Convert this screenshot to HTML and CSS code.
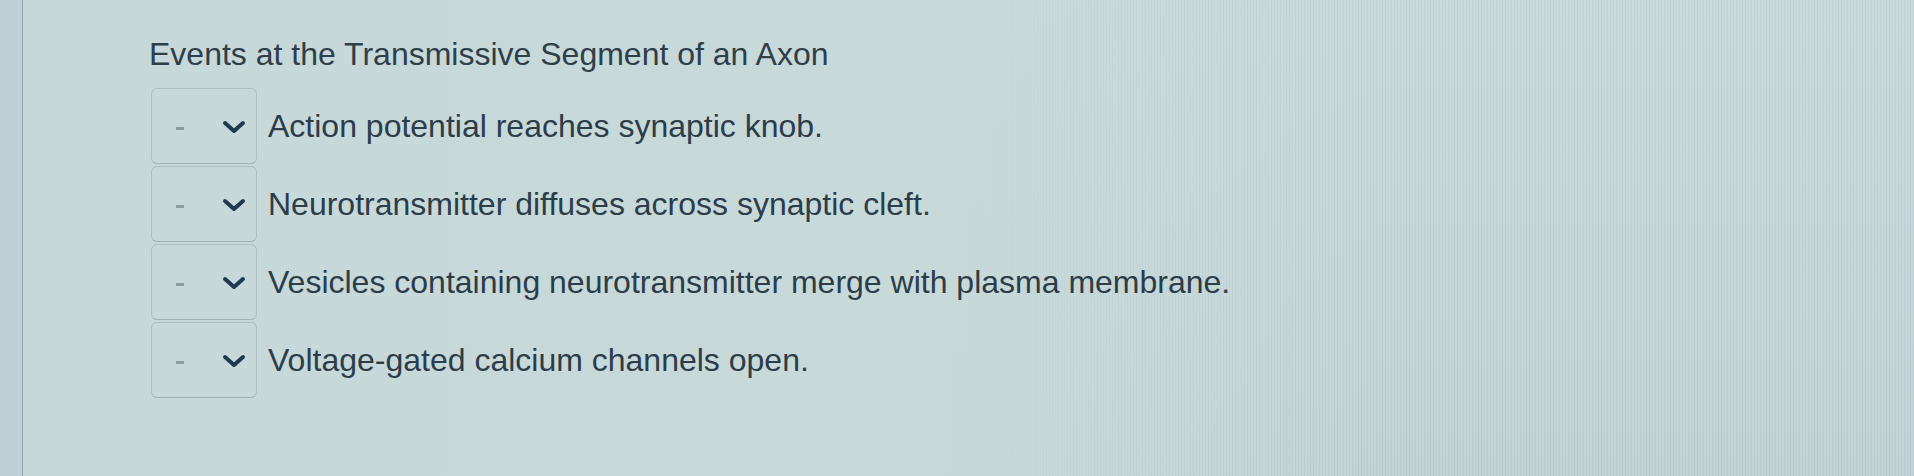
FILE: index.html
```html
<!DOCTYPE html>
<html lang="en">
<head>
  <meta charset="UTF-8">
  <title>Events at the Transmissive Segment of an Axon</title>
  <link rel="stylesheet" href="styles.css">
</head>
<body>

  <div class="edge"></div>

  <main class="question">
    <h1 class="question-title">Events at the Transmissive Segment of an Axon</h1>

    <div class="order-list">
      <div class="order-row">
        <div class="order-select">
          <span class="order-value"></span>
          <svg class="order-caret" width="24" height="14" viewBox="0 0 24 14"><polyline points="3,3 12,11 21,3"/></svg>
        </div>
        <span class="order-label">Action potential reaches synaptic knob.</span>
      </div>

      <div class="order-row">
        <div class="order-select">
          <span class="order-value"></span>
          <svg class="order-caret" width="24" height="14" viewBox="0 0 24 14"><polyline points="3,3 12,11 21,3"/></svg>
        </div>
        <span class="order-label">Neurotransmitter diffuses across synaptic cleft.</span>
      </div>

      <div class="order-row">
        <div class="order-select">
          <span class="order-value"></span>
          <svg class="order-caret" width="24" height="14" viewBox="0 0 24 14"><polyline points="3,3 12,11 21,3"/></svg>
        </div>
        <span class="order-label">Vesicles containing neurotransmitter merge with plasma membrane.</span>
      </div>

      <div class="order-row">
        <div class="order-select">
          <span class="order-value"></span>
          <svg class="order-caret" width="24" height="14" viewBox="0 0 24 14"><polyline points="3,3 12,11 21,3"/></svg>
        </div>
        <span class="order-label">Voltage-gated calcium channels open.</span>
      </div>
    </div>
  </main>

</body>
</html>
```

FILE: styles.css
```css
/* Page */
body {
  margin: 0;
  height: 476px;
  display: flex;
  font-family: "Liberation Sans", Arial, sans-serif;
  color: #2c3d49;
  background:
    linear-gradient(90deg, #c6d8d9 0%, #c8d9da 48%, rgba(200, 217, 219, 0) 72%),
    repeating-linear-gradient(90deg, rgba(120, 150, 160, 0) 0 2px, rgba(120, 150, 160, 0.16) 2px 3px),
    linear-gradient(180deg, #cbdcdd 0%, #c3d5d7 100%);
  overflow: hidden;
}

/* Side panel edge on the left */
.edge {
  width: 22px;
  flex-shrink: 0;
  background: #bed0d4;
  border-right: 1px solid #8ea6b0;
}

/* Question block */
.question {
  padding: 36px 0 0 126px;
}

.question-title {
  margin: 0 0 16px;
  font-size: 32px;
  line-height: 36px;
  font-weight: 400;
  color: #2f3f4a;
}

.order-list {
  display: flex;
  flex-direction: column;
  gap: 2px;
  padding-left: 2px;
}

.order-row {
  display: flex;
  align-items: center;
  gap: 11px;
}

/* Dropdown box */
.order-select {
  width: 80px;
  height: 74px;
  border: 1px solid #aebfc3;
  border-bottom-color: #9fb1b6;
  border-radius: 6px;
  display: flex;
  align-items: center;
  padding-left: 24px;
}

.order-value {
  width: 8px;
  height: 3px;
  margin-right: 38px;
  margin-top: 4px;
  background: #8c9da2;
}

.order-caret {
  display: block;
  margin-top: 2px;
}

.order-caret polyline {
  fill: none;
  stroke: #1e3951;
  stroke-width: 4;
  stroke-linecap: round;
  stroke-linejoin: round;
}

.order-label {
  font-size: 32px;
  line-height: 36px;
  color: #2c3d49;
}
```
